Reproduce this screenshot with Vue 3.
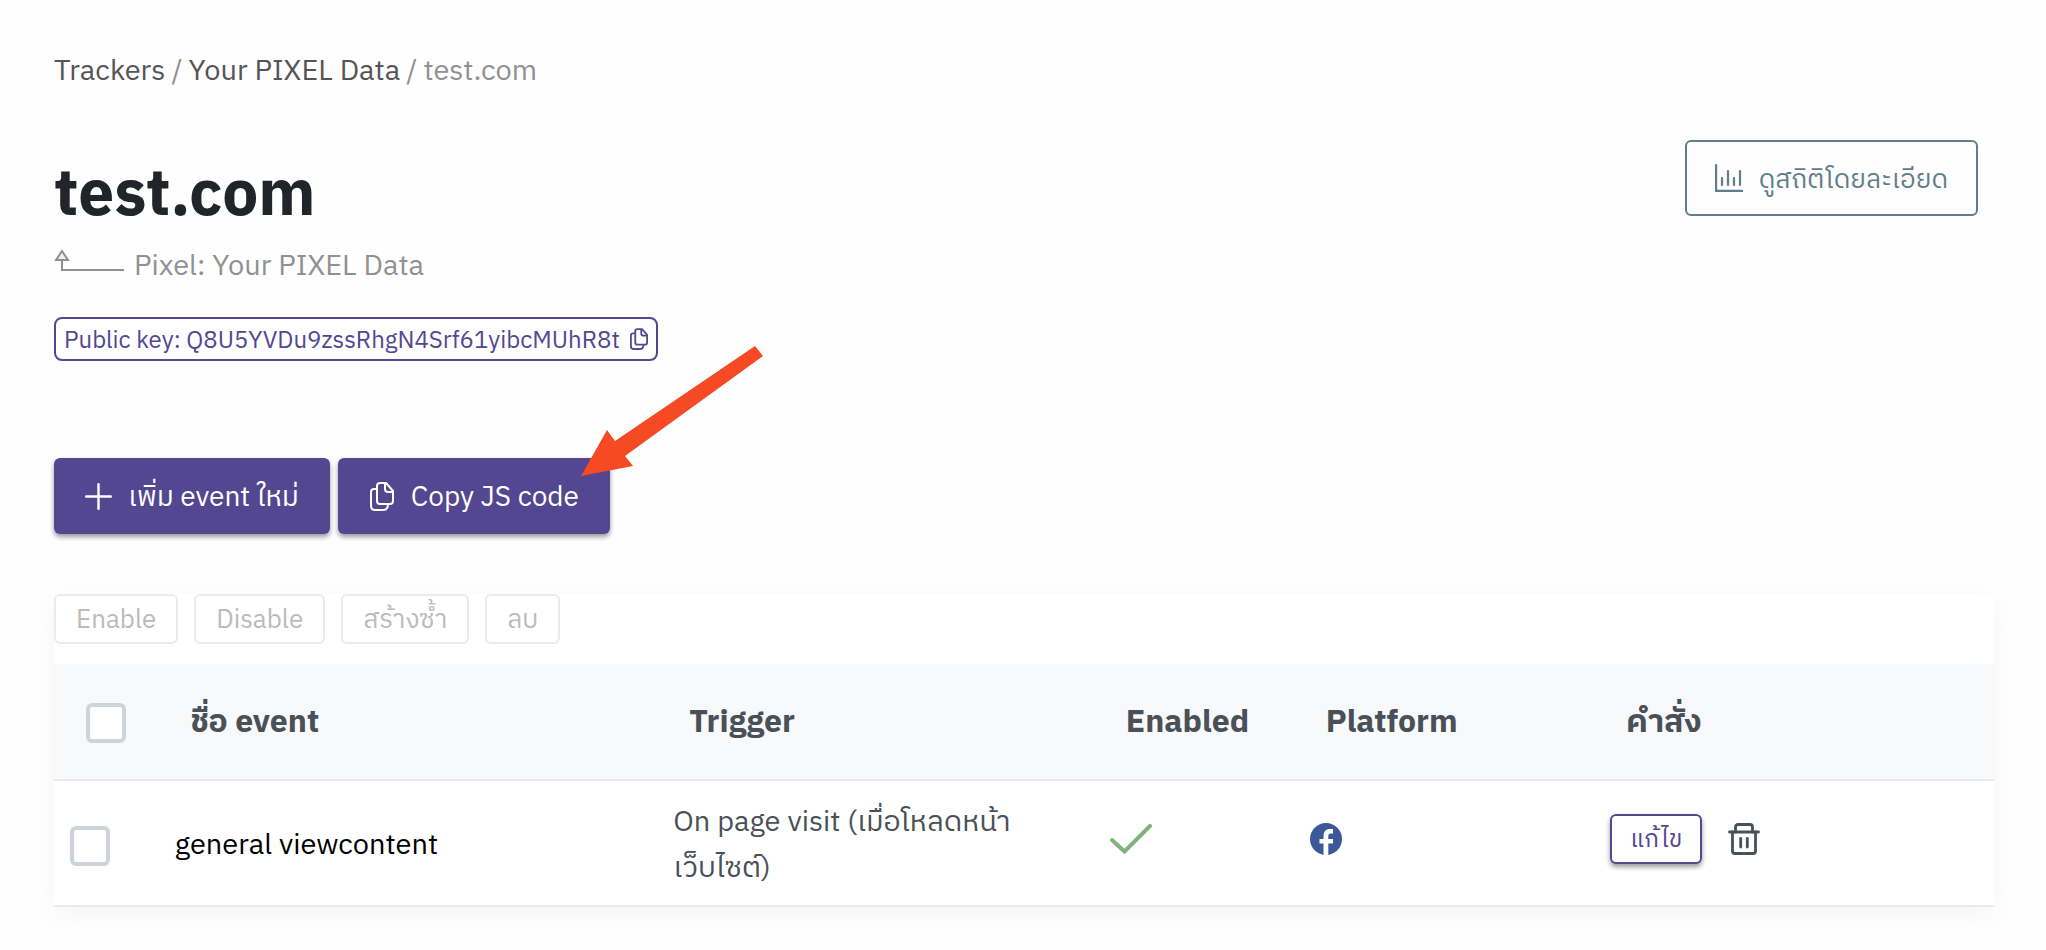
<template>
  <main class="page">
    <nav class="breadcrumb" aria-label="Breadcrumb">
      <a href="#">Trackers</a>
      <span>/</span>
      <a href="#">Your PIXEL Data</a>
      <span>/</span>
      <span>test.com</span>
    </nav>

    <header class="page-header">
      <div>
        <h1>test.com</h1>
        <div class="parent-pixel">
          <svg class="parent-arrow" viewBox="0 0 70 22" fill="none" stroke="currentColor" stroke-width="2">
            <path d="M8 2 L14 11 H2 Z" fill="#eee" />
            <path d="M8 11 V21 H70" />
          </svg>
          <span>Pixel: Your PIXEL Data</span>
        </div>
        <button class="public-key" type="button">
          <span>Public key: {{ publicKey }}</span>
          <svg class="key-icon" viewBox="0 0 24 29" fill="none" stroke="currentColor" stroke-width="2.4" stroke-linejoin="round">
            <path d="M10 1.2 H16 L22.8 9 V19 Q22.8 22 20 22 H10 Q7 22 7 19 V4 Q7 1.2 10 1.2 Z" />
            <path d="M15 2 V7 Q15 10 18 10 H22" />
            <path d="M7 7 H4 Q1.2 7 1.2 10 V24 Q1.2 27.8 5 27.8 H13 Q18 27.8 18 22" />
          </svg>
        </button>
      </div>
      <button class="btn btn-stats" type="button">
        <svg class="stats-icon" viewBox="0 0 28 28" fill="none" stroke="currentColor" stroke-width="2.2" stroke-linecap="round">
          <path d="M1.1 1.1 V26.9 H27" />
          <path d="M7 14 V21 M13 7 V21 M19 14 V21 M25 7 V21" />
        </svg>
        <span>ดูสถิติโดยละเอียด</span>
      </button>
    </header>

    <div class="actions">
      <button class="btn btn-primary" type="button">
        <svg class="plus-icon" viewBox="0 0 27 27" stroke="currentColor" stroke-width="2.4" stroke-linecap="round">
          <path d="M13.5 1.2 V25.8 M1.2 13.5 H25.8" />
        </svg>
        <span>เพิ่ม event ใหม่</span>
      </button>
      <div class="copy-wrap">
        <button class="btn btn-primary" type="button">
          <svg class="copy-icon" viewBox="0 0 24 29" fill="none" stroke="currentColor" stroke-width="2" stroke-linejoin="round">
            <path d="M10 1 H16 L23 9 V19 Q23 22 20 22 H10 Q7 22 7 19 V4 Q7 1 10 1 Z" />
            <path d="M15 2 V7 Q15 10 18 10 H22" />
            <path d="M7 7 H4 Q1 7 1 10 V24 Q1 28 5 28 H13 Q18 28 18 22" />
          </svg>
          <span>Copy JS code</span>
        </button>
        <svg class="pointer" viewBox="0 0 182 130" aria-hidden="true">
          <path d="M0 130 L26 84 L34 95 L174 0 L182 10 L44 110 L52 120 Z" fill="#f64a25" />
        </svg>
      </div>
    </div>

    <section class="card">
      <div class="bulk-actions">
        <button v-for="label in bulkActions" :key="label" class="btn-bulk" type="button" disabled>{{ label }}</button>
      </div>
      <table class="events">
        <colgroup>
          <col class="col-check">
          <col class="col-name">
          <col class="col-trigger">
          <col class="col-enabled">
          <col class="col-platform">
          <col>
        </colgroup>
        <thead>
          <tr>
            <th><input v-model="allSelected" type="checkbox" aria-label="Select all"></th>
            <th v-for="title in columns" :key="title">{{ title }}</th>
          </tr>
        </thead>
        <tbody>
          <tr v-for="event in events" :key="event.name">
            <td><input v-model="event.selected" type="checkbox" :aria-label="event.name"></td>
            <td class="event-name">{{ event.name }}</td>
            <td>{{ event.trigger }}</td>
            <td class="cell-icon">
              <svg v-if="event.enabled" class="check-icon" viewBox="0 0 42 30" fill="none" stroke="#82b37c" stroke-width="4" stroke-linecap="round">
                <path d="M2 16 L14.5 27.5 L40 2" />
              </svg>
            </td>
            <td class="cell-icon">
              <svg class="facebook-icon" viewBox="0 0 32 32">
                <circle cx="16" cy="16" r="16" fill="#3b5998" />
                <path d="M13.5 32 V20.5 H9.5 V16 H13.5 V13 C13.5 8.5 16 6 20 6 H23 V10.5 H21 C19 10.5 18.3 11.5 18.3 13 V16 H23 V20.5 H18.3 V32 Z" fill="#fff" />
              </svg>
            </td>
            <td class="cell-icon">
              <div class="row-actions">
                <button class="btn-edit" type="button">แก้ไข</button>
                <button class="btn-trash" type="button" aria-label="Delete">
                  <svg class="trash-icon" viewBox="0 0 32 32" fill="none" stroke="currentColor" stroke-width="2.8" stroke-linecap="round" stroke-linejoin="round">
                    <path d="M1.5 9 H30.5" />
                    <path d="M7.5 9 V4 Q7.5 1.5 10 1.5 H22 Q24.5 1.5 24.5 4 V9" />
                    <path d="M4.5 9 V28 Q4.5 30.5 7 30.5 H25 Q27.5 30.5 27.5 28 V9" />
                    <path d="M12.7 15.5 V24 M19.3 15.5 V24" />
                  </svg>
                </button>
              </div>
            </td>
          </tr>
        </tbody>
      </table>
    </section>
  </main>
</template>

<script setup>
import { ref } from 'vue'

const publicKey = 'Q8U5YVDu9zssRhgN4Srf61yibcMUhR8t'
const bulkActions = ['Enable', 'Disable', 'สร้างซ้ำ', 'ลบ']
const columns = ['ชื่อ event', 'Trigger', 'Enabled', 'Platform', 'คำสั่ง']

const allSelected = ref(false)
const events = ref([
  {
    name: 'general viewcontent',
    trigger: 'On page visit (เมื่อโหลดหน้าเว็บไซต์)',
    enabled: true,
    selected: false
  }
])
</script>

<style>
body {
  background: #fefefe;
}
</style>

<style scoped>
.page {
  padding: 50px 52px 40px 54px;
  color: #495057;
  font-family: "IBM Plex Sans Thai", "IBM Plex Sans", "Open Sans", "Noto Sans", sans-serif;
  font-size: 29px;
  line-height: 46px;
}

button {
  font-family: inherit;
  cursor: pointer;
}

svg {
  display: block;
  flex-shrink: 0;
}

.breadcrumb {
  display: flex;
  gap: 6px;
  color: #919191;
  line-height: 44px;
}

.breadcrumb a {
  color: #555;
  text-decoration: none;
}

.page-header {
  display: flex;
  align-items: flex-start;
  justify-content: space-between;
  margin-top: 46px;
}

h1 {
  margin: 0;
  padding-top: 4px;
  color: #212529;
  font-size: 64px;
  font-weight: 700;
  line-height: 105px;
}

.parent-pixel {
  display: flex;
  align-items: center;
  gap: 10px;
  color: #919191;
  line-height: 36px;
}

.parent-arrow {
  width: 70px;
  height: 22px;
  margin-bottom: 14px;
}

.public-key {
  display: flex;
  align-items: center;
  gap: 10px;
  height: 44px;
  margin-top: 32px;
  padding: 0 8px;
  border: 2px solid #524790;
  border-radius: 8px;
  background: #fff;
  color: #524790;
  font-size: 24px;
}

.public-key span,
.btn span {
  padding-top: 4px;
}

.key-icon {
  width: 18px;
  height: 22px;
}

.btn {
  display: flex;
  align-items: center;
  gap: 16px;
  height: 76px;
  border: 0;
  border-radius: 6px;
  font-size: 28px;
}

.btn-stats {
  margin-right: 16px;
  padding: 0 28px;
  border: 2px solid #607d8b;
  background: transparent;
  color: #607d8b;
  font-size: 26px;
}

.stats-icon {
  width: 28px;
  height: 28px;
}

.actions {
  display: flex;
  gap: 8px;
  margin-top: 97px;
}

.btn-primary {
  padding: 0 31px;
  background: #524790;
  color: #fff;
  box-shadow: 0 3px 5px rgba(0, 0, 0, 0.4);
}

.plus-icon {
  width: 27px;
  height: 27px;
}

.copy-icon {
  width: 26px;
  height: 29px;
}

.copy-wrap {
  position: relative;
}

/* red arrow pointing at the copy button */
.pointer {
  position: absolute;
  right: -153px;
  bottom: 58px;
  width: 182px;
  height: 130px;
  pointer-events: none;
}

.card {
  margin-top: 60px;
  background: #fff;
  box-shadow: 0 8px 26px rgba(0, 0, 0, 0.04);
}

.bulk-actions {
  display: flex;
  gap: 16px;
  padding-bottom: 20px;
}

.btn-bulk {
  height: 50px;
  padding: 2px 20px 0;
  border: 2px solid #ebebeb;
  border-radius: 6px;
  background: #fff;
  color: #bbb;
  font-size: 26px;
  cursor: default;
}

.events {
  width: 100%;
  border-collapse: separate;
  border-spacing: 0;
  table-layout: fixed;
}

.col-check {
  width: 5.4%;
}

.col-name {
  width: 25.7%;
}

.col-trigger {
  width: 22.5%;
}

.col-enabled {
  width: 10.3%;
}

.col-platform {
  width: 15.5%;
}

th,
td {
  box-sizing: border-box;
  border-bottom: 2px solid #e9eaee;
  text-align: left;
  vertical-align: middle;
}

th {
  height: 117px;
  padding: 2px 0 0 32px;
  background: #f8f9fb;
  font-size: 32px;
  font-weight: 700;
}

td {
  height: 126px;
  padding: 19px 16px 13px;
}

.cell-icon {
  padding: 12px 16px 20px;
}

.event-name {
  color: #000;
}

input[type="checkbox"] {
  display: block;
  width: 40px;
  height: 40px;
  margin: 0;
  border: 4px solid #ced4da;
  border-radius: 6px;
  background: #fff;
  appearance: none;
}

input[type="checkbox"]:checked {
  border-color: #524790;
  background: #524790;
}

.check-icon {
  width: 42px;
  height: 30px;
}

.facebook-icon,
.trash-icon {
  width: 32px;
  height: 32px;
}

.row-actions {
  display: flex;
  align-items: center;
  gap: 26px;
}

.btn-edit {
  height: 50px;
  padding: 2px 18px 0;
  border: 2px solid #524790;
  border-radius: 6px;
  background: #fff;
  color: #524790;
  font-size: 24px;
  box-shadow: 0 3px 5px rgba(0, 0, 0, 0.4);
}

.btn-trash {
  padding: 0;
  border: 0;
  background: transparent;
  color: #495057;
}
</style>
